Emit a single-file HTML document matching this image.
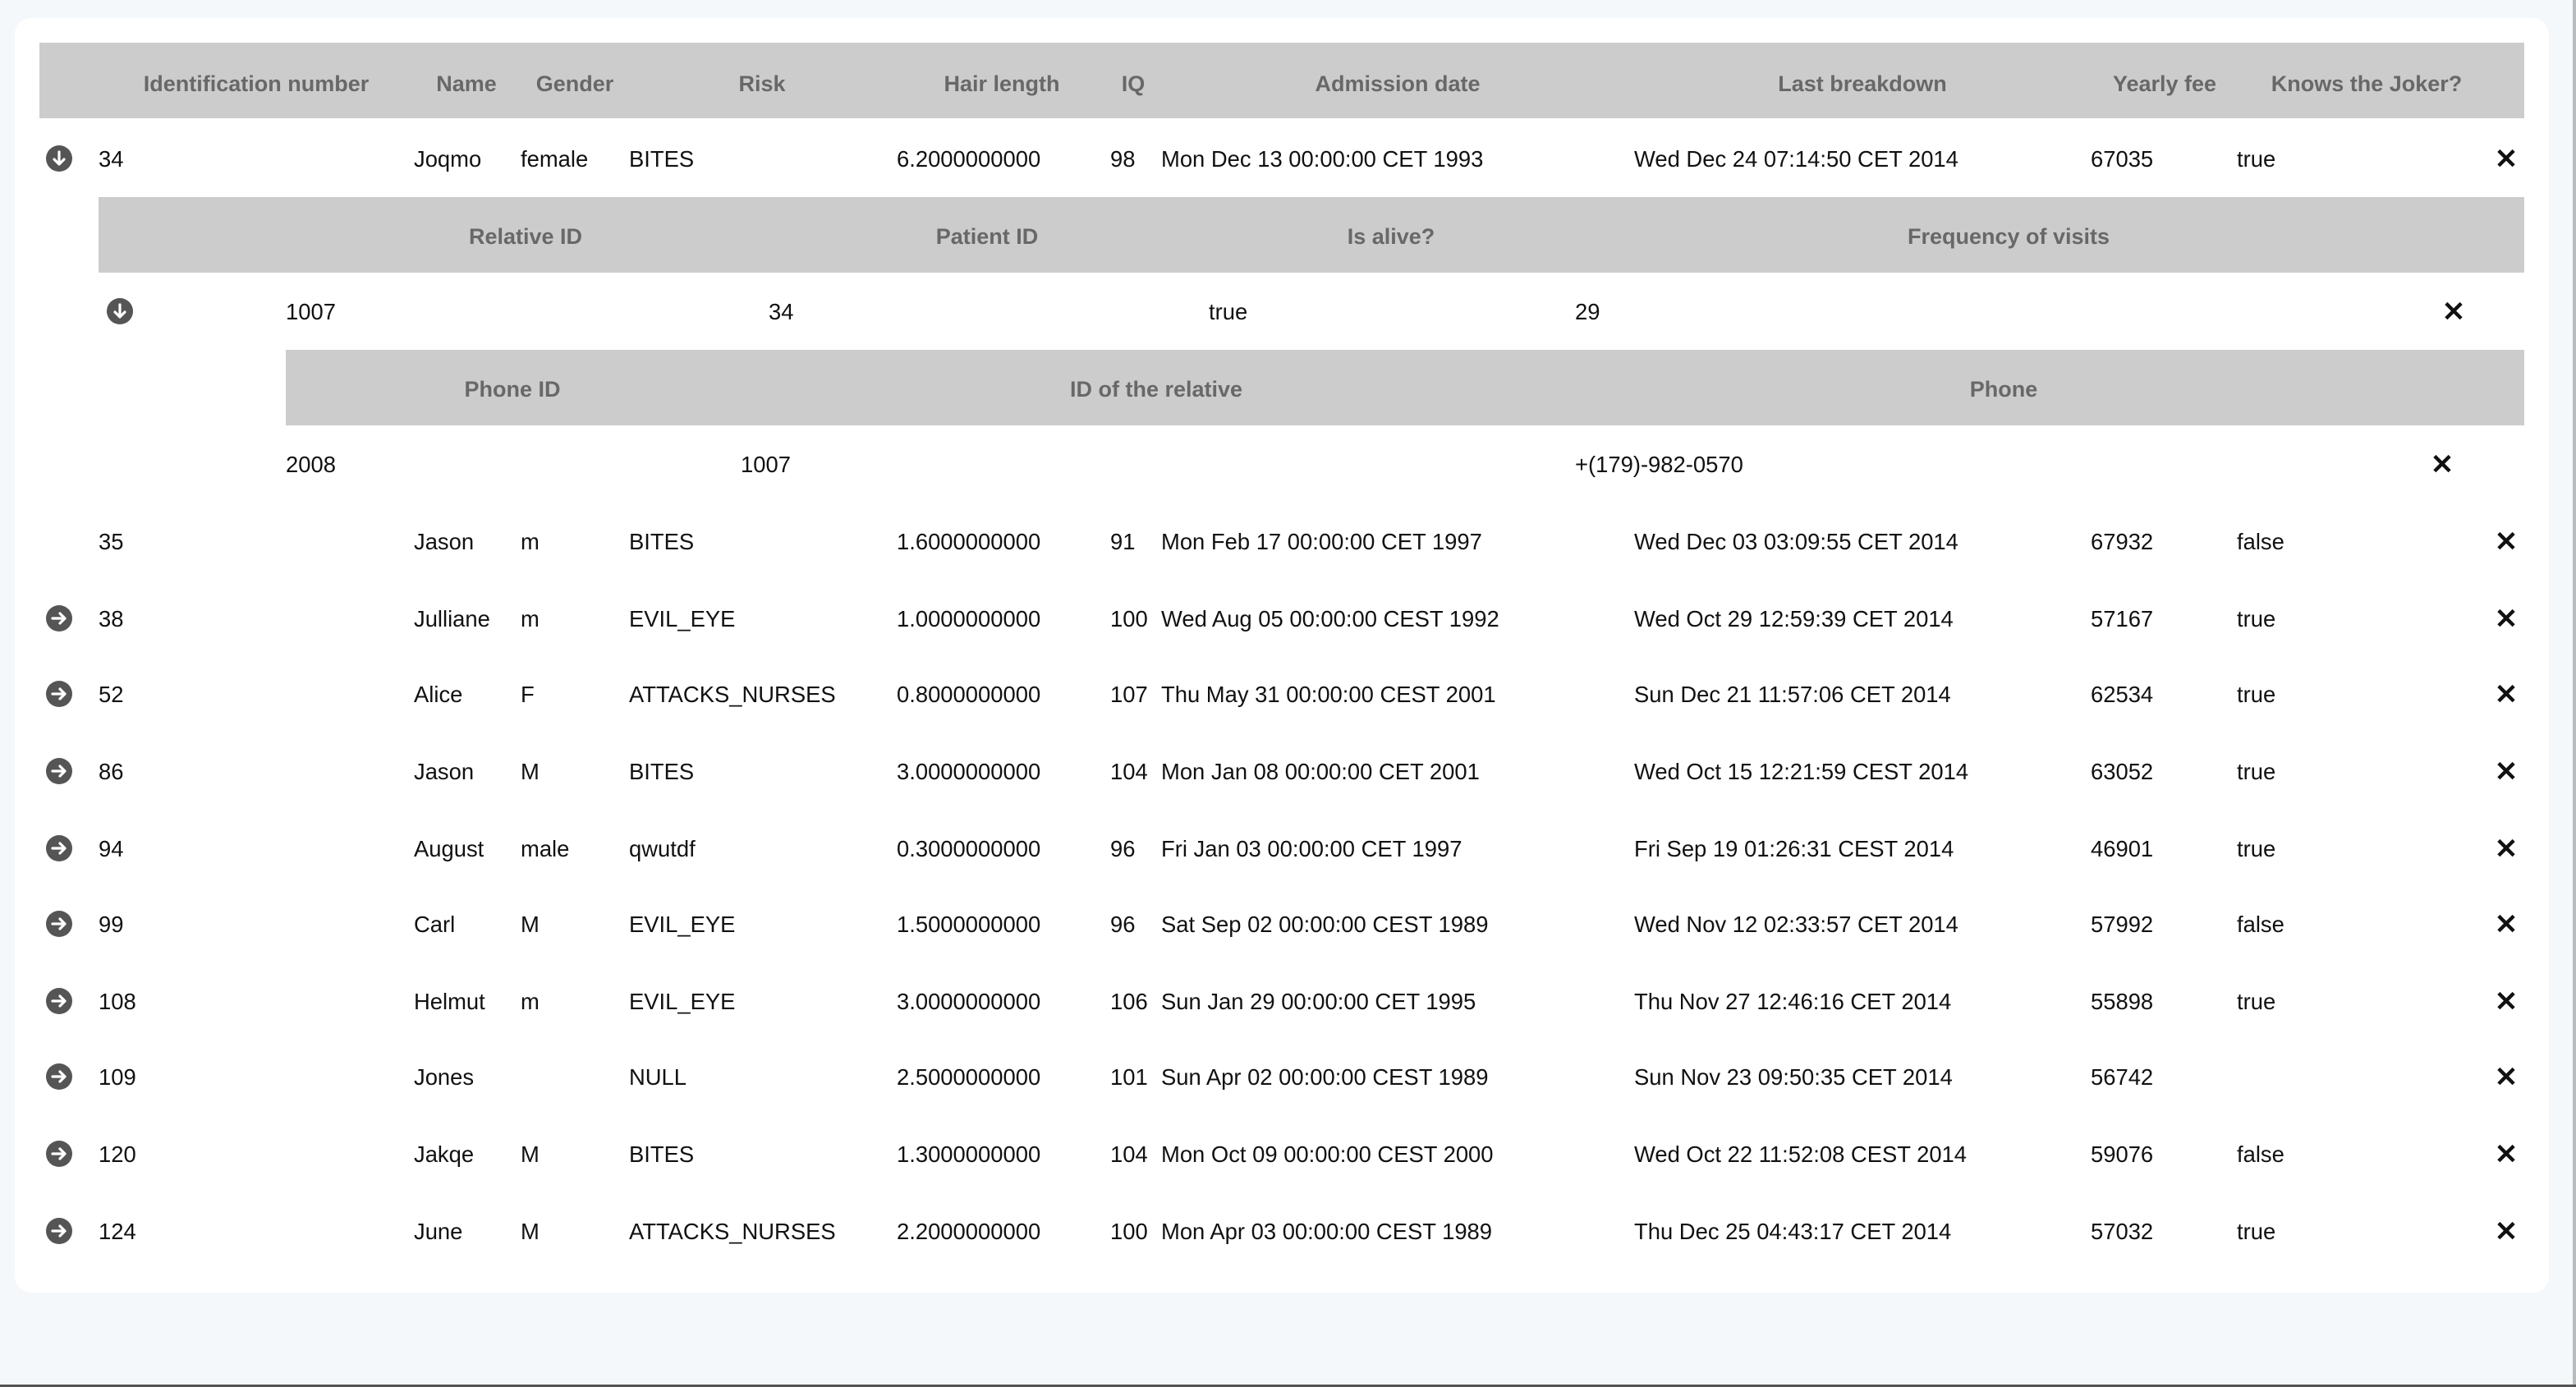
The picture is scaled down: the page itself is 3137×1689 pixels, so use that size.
<!DOCTYPE html>
<html><head><meta charset="utf-8">
<style>
html,body{margin:0;padding:0;}
body{width:1568.5px;height:844.5px;zoom:2;background:#f5f8fa;position:relative;overflow:hidden;font-family:"Liberation Sans",Arial,sans-serif;font-size:13.7px;color:#111;}
.card{position:absolute;left:9px;top:11px;width:1543px;height:776px;background:#fff;border-radius:10px;}
.hd{position:absolute;background:#cccccc;height:46px;}
.h{position:absolute;transform:translateX(-50%);font-weight:bold;font-size:13.5px;color:#686868;white-space:nowrap;line-height:18px;margin-top:1px;}
.c{position:absolute;white-space:nowrap;line-height:18px;margin-top:1px;}
.x{position:absolute;font-weight:bold;font-size:17px;line-height:18px;transform:translateX(-50%);margin-top:1px;}
.ic{position:absolute;width:16px;height:16px;border-radius:50%;background:#555;transform:translate(-50%,-50%);margin-top:0.5px;}
.ic svg{position:absolute;left:0;top:0;}
.sb{position:absolute;right:0;top:0;width:2px;height:844px;background:#bbb;}
.bb{position:absolute;left:0;bottom:0;width:100%;height:1.5px;background:#555;}
</style></head><body>
<div class="card"></div>
<div class="sb"></div><div class="bb"></div>

<div class="hd" style="left:24px;top:26px;width:1513px"></div>
<div class="h" style="left:156px;top:41px">Identification number</div>
<div class="h" style="left:284px;top:41px">Name</div>
<div class="h" style="left:350px;top:41px">Gender</div>
<div class="h" style="left:464px;top:41px">Risk</div>
<div class="h" style="left:610px;top:41px">Hair length</div>
<div class="h" style="left:690px;top:41px">IQ</div>
<div class="h" style="left:851px;top:41px">Admission date</div>
<div class="h" style="left:1134px;top:41px">Last breakdown</div>
<div class="h" style="left:1318px;top:41px">Yearly fee</div>
<div class="h" style="left:1441px;top:41px">Knows the Joker?</div>

<div class="ic" style="left:36px;top:96px"><svg width="16" height="16" viewBox="0 0 16 16"><path d="M8 4v7M5 8.5l3 3 3-3" stroke="#fff" stroke-width="1.6" fill="none" stroke-linecap="round" stroke-linejoin="round"/></svg></div>
<div class="c" style="left:60px;top:87px">34</div>
<div class="c" style="left:252px;top:87px">Joqmo</div>
<div class="c" style="left:317px;top:87px">female</div>
<div class="c" style="left:383px;top:87px">BITES</div>
<div class="c" style="left:546px;top:87px">6.2000000000</div>
<div class="c" style="left:676px;top:87px">98</div>
<div class="c" style="left:707px;top:87px">Mon Dec 13 00:00:00 CET 1993</div>
<div class="c" style="left:995px;top:87px">Wed Dec 24 07:14:50 CET 2014</div>
<div class="c" style="left:1273px;top:87px">67035</div>
<div class="c" style="left:1362px;top:87px">true</div>
<div class="x" style="left:1526px;top:87px">✕</div>

<div class="hd" style="left:60px;top:120px;width:1477px"></div>
<div class="h" style="left:320px;top:134px">Relative ID</div>
<div class="h" style="left:601px;top:134px">Patient ID</div>
<div class="h" style="left:847px;top:134px">Is alive?</div>
<div class="h" style="left:1223px;top:134px">Frequency of visits</div>

<div class="ic" style="left:73px;top:189px"><svg width="16" height="16" viewBox="0 0 16 16"><path d="M8 4v7M5 8.5l3 3 3-3" stroke="#fff" stroke-width="1.6" fill="none" stroke-linecap="round" stroke-linejoin="round"/></svg></div>
<div class="c" style="left:174px;top:180px">1007</div>
<div class="c" style="left:468px;top:180px">34</div>
<div class="c" style="left:736px;top:180px">true</div>
<div class="c" style="left:959px;top:180px">29</div>
<div class="x" style="left:1494px;top:180px">✕</div>

<div class="hd" style="left:174px;top:213px;width:1363px"></div>
<div class="h" style="left:312px;top:227px">Phone ID</div>
<div class="h" style="left:704px;top:227px">ID of the relative</div>
<div class="h" style="left:1220px;top:227px">Phone</div>

<div class="c" style="left:174px;top:273px">2008</div>
<div class="c" style="left:451px;top:273px">1007</div>
<div class="c" style="left:959px;top:273px">+(179)-982-0570</div>
<div class="x" style="left:1487px;top:273px">✕</div>

<div class="c" style="left:60px;top:320px">35</div>
<div class="c" style="left:252px;top:320px">Jason</div>
<div class="c" style="left:317px;top:320px">m</div>
<div class="c" style="left:383px;top:320px">BITES</div>
<div class="c" style="left:546px;top:320px">1.6000000000</div>
<div class="c" style="left:676px;top:320px">91</div>
<div class="c" style="left:707px;top:320px">Mon Feb 17 00:00:00 CET 1997</div>
<div class="c" style="left:995px;top:320px">Wed Dec 03 03:09:55 CET 2014</div>
<div class="c" style="left:1273px;top:320px">67932</div>
<div class="c" style="left:1362px;top:320px">false</div>
<div class="x" style="left:1526px;top:320px">✕</div>

<div class="ic" style="left:36px;top:376px"><svg width="16" height="16" viewBox="0 0 16 16"><path d="M4 8h7M8.5 5l3 3-3 3" stroke="#fff" stroke-width="1.6" fill="none" stroke-linecap="round" stroke-linejoin="round"/></svg></div>
<div class="c" style="left:60px;top:367px">38</div>
<div class="c" style="left:252px;top:367px">Julliane</div>
<div class="c" style="left:317px;top:367px">m</div>
<div class="c" style="left:383px;top:367px">EVIL_EYE</div>
<div class="c" style="left:546px;top:367px">1.0000000000</div>
<div class="c" style="left:676px;top:367px">100</div>
<div class="c" style="left:707px;top:367px">Wed Aug 05 00:00:00 CEST 1992</div>
<div class="c" style="left:995px;top:367px">Wed Oct 29 12:59:39 CET 2014</div>
<div class="c" style="left:1273px;top:367px">57167</div>
<div class="c" style="left:1362px;top:367px">true</div>
<div class="x" style="left:1526px;top:367px">✕</div>

<div class="ic" style="left:36px;top:422px"><svg width="16" height="16" viewBox="0 0 16 16"><path d="M4 8h7M8.5 5l3 3-3 3" stroke="#fff" stroke-width="1.6" fill="none" stroke-linecap="round" stroke-linejoin="round"/></svg></div>
<div class="c" style="left:60px;top:413px">52</div>
<div class="c" style="left:252px;top:413px">Alice</div>
<div class="c" style="left:317px;top:413px">F</div>
<div class="c" style="left:383px;top:413px">ATTACKS_NURSES</div>
<div class="c" style="left:546px;top:413px">0.8000000000</div>
<div class="c" style="left:676px;top:413px">107</div>
<div class="c" style="left:707px;top:413px">Thu May 31 00:00:00 CEST 2001</div>
<div class="c" style="left:995px;top:413px">Sun Dec 21 11:57:06 CET 2014</div>
<div class="c" style="left:1273px;top:413px">62534</div>
<div class="c" style="left:1362px;top:413px">true</div>
<div class="x" style="left:1526px;top:413px">✕</div>

<div class="ic" style="left:36px;top:469px"><svg width="16" height="16" viewBox="0 0 16 16"><path d="M4 8h7M8.5 5l3 3-3 3" stroke="#fff" stroke-width="1.6" fill="none" stroke-linecap="round" stroke-linejoin="round"/></svg></div>
<div class="c" style="left:60px;top:460px">86</div>
<div class="c" style="left:252px;top:460px">Jason</div>
<div class="c" style="left:317px;top:460px">M</div>
<div class="c" style="left:383px;top:460px">BITES</div>
<div class="c" style="left:546px;top:460px">3.0000000000</div>
<div class="c" style="left:676px;top:460px">104</div>
<div class="c" style="left:707px;top:460px">Mon Jan 08 00:00:00 CET 2001</div>
<div class="c" style="left:995px;top:460px">Wed Oct 15 12:21:59 CEST 2014</div>
<div class="c" style="left:1273px;top:460px">63052</div>
<div class="c" style="left:1362px;top:460px">true</div>
<div class="x" style="left:1526px;top:460px">✕</div>

<div class="ic" style="left:36px;top:516px"><svg width="16" height="16" viewBox="0 0 16 16"><path d="M4 8h7M8.5 5l3 3-3 3" stroke="#fff" stroke-width="1.6" fill="none" stroke-linecap="round" stroke-linejoin="round"/></svg></div>
<div class="c" style="left:60px;top:507px">94</div>
<div class="c" style="left:252px;top:507px">August</div>
<div class="c" style="left:317px;top:507px">male</div>
<div class="c" style="left:383px;top:507px">qwutdf</div>
<div class="c" style="left:546px;top:507px">0.3000000000</div>
<div class="c" style="left:676px;top:507px">96</div>
<div class="c" style="left:707px;top:507px">Fri Jan 03 00:00:00 CET 1997</div>
<div class="c" style="left:995px;top:507px">Fri Sep 19 01:26:31 CEST 2014</div>
<div class="c" style="left:1273px;top:507px">46901</div>
<div class="c" style="left:1362px;top:507px">true</div>
<div class="x" style="left:1526px;top:507px">✕</div>

<div class="ic" style="left:36px;top:562px"><svg width="16" height="16" viewBox="0 0 16 16"><path d="M4 8h7M8.5 5l3 3-3 3" stroke="#fff" stroke-width="1.6" fill="none" stroke-linecap="round" stroke-linejoin="round"/></svg></div>
<div class="c" style="left:60px;top:553px">99</div>
<div class="c" style="left:252px;top:553px">Carl</div>
<div class="c" style="left:317px;top:553px">M</div>
<div class="c" style="left:383px;top:553px">EVIL_EYE</div>
<div class="c" style="left:546px;top:553px">1.5000000000</div>
<div class="c" style="left:676px;top:553px">96</div>
<div class="c" style="left:707px;top:553px">Sat Sep 02 00:00:00 CEST 1989</div>
<div class="c" style="left:995px;top:553px">Wed Nov 12 02:33:57 CET 2014</div>
<div class="c" style="left:1273px;top:553px">57992</div>
<div class="c" style="left:1362px;top:553px">false</div>
<div class="x" style="left:1526px;top:553px">✕</div>

<div class="ic" style="left:36px;top:609px"><svg width="16" height="16" viewBox="0 0 16 16"><path d="M4 8h7M8.5 5l3 3-3 3" stroke="#fff" stroke-width="1.6" fill="none" stroke-linecap="round" stroke-linejoin="round"/></svg></div>
<div class="c" style="left:60px;top:600px">108</div>
<div class="c" style="left:252px;top:600px">Helmut</div>
<div class="c" style="left:317px;top:600px">m</div>
<div class="c" style="left:383px;top:600px">EVIL_EYE</div>
<div class="c" style="left:546px;top:600px">3.0000000000</div>
<div class="c" style="left:676px;top:600px">106</div>
<div class="c" style="left:707px;top:600px">Sun Jan 29 00:00:00 CET 1995</div>
<div class="c" style="left:995px;top:600px">Thu Nov 27 12:46:16 CET 2014</div>
<div class="c" style="left:1273px;top:600px">55898</div>
<div class="c" style="left:1362px;top:600px">true</div>
<div class="x" style="left:1526px;top:600px">✕</div>

<div class="ic" style="left:36px;top:655px"><svg width="16" height="16" viewBox="0 0 16 16"><path d="M4 8h7M8.5 5l3 3-3 3" stroke="#fff" stroke-width="1.6" fill="none" stroke-linecap="round" stroke-linejoin="round"/></svg></div>
<div class="c" style="left:60px;top:646px">109</div>
<div class="c" style="left:252px;top:646px">Jones</div>
<div class="c" style="left:383px;top:646px">NULL</div>
<div class="c" style="left:546px;top:646px">2.5000000000</div>
<div class="c" style="left:676px;top:646px">101</div>
<div class="c" style="left:707px;top:646px">Sun Apr 02 00:00:00 CEST 1989</div>
<div class="c" style="left:995px;top:646px">Sun Nov 23 09:50:35 CET 2014</div>
<div class="c" style="left:1273px;top:646px">56742</div>
<div class="x" style="left:1526px;top:646px">✕</div>

<div class="ic" style="left:36px;top:702px"><svg width="16" height="16" viewBox="0 0 16 16"><path d="M4 8h7M8.5 5l3 3-3 3" stroke="#fff" stroke-width="1.6" fill="none" stroke-linecap="round" stroke-linejoin="round"/></svg></div>
<div class="c" style="left:60px;top:693px">120</div>
<div class="c" style="left:252px;top:693px">Jakqe</div>
<div class="c" style="left:317px;top:693px">M</div>
<div class="c" style="left:383px;top:693px">BITES</div>
<div class="c" style="left:546px;top:693px">1.3000000000</div>
<div class="c" style="left:676px;top:693px">104</div>
<div class="c" style="left:707px;top:693px">Mon Oct 09 00:00:00 CEST 2000</div>
<div class="c" style="left:995px;top:693px">Wed Oct 22 11:52:08 CEST 2014</div>
<div class="c" style="left:1273px;top:693px">59076</div>
<div class="c" style="left:1362px;top:693px">false</div>
<div class="x" style="left:1526px;top:693px">✕</div>

<div class="ic" style="left:36px;top:749px"><svg width="16" height="16" viewBox="0 0 16 16"><path d="M4 8h7M8.5 5l3 3-3 3" stroke="#fff" stroke-width="1.6" fill="none" stroke-linecap="round" stroke-linejoin="round"/></svg></div>
<div class="c" style="left:60px;top:740px">124</div>
<div class="c" style="left:252px;top:740px">June</div>
<div class="c" style="left:317px;top:740px">M</div>
<div class="c" style="left:383px;top:740px">ATTACKS_NURSES</div>
<div class="c" style="left:546px;top:740px">2.2000000000</div>
<div class="c" style="left:676px;top:740px">100</div>
<div class="c" style="left:707px;top:740px">Mon Apr 03 00:00:00 CEST 1989</div>
<div class="c" style="left:995px;top:740px">Thu Dec 25 04:43:17 CET 2014</div>
<div class="c" style="left:1273px;top:740px">57032</div>
<div class="c" style="left:1362px;top:740px">true</div>
<div class="x" style="left:1526px;top:740px">✕</div>
</body></html>
